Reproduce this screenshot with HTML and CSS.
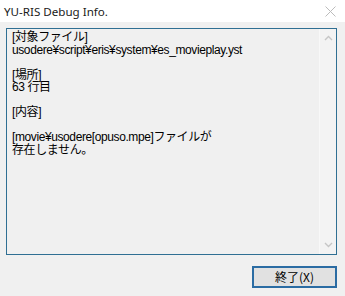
FILE: index.html
```html
<!DOCTYPE html>
<html lang="ja">

<head>
    <meta charset="UTF-8">
    <title>YU-RIS Debug Info.</title>
    <link rel="stylesheet" href="styles.css">
</head>

<body>
    <div id="window">
        <div class="title-bar">
            <span class="title">YU-RIS Debug Info.</span>
            <span class="close">
                <svg width="11" height="11" viewBox="0 0 11 11">
                    <path d="M0.5 0.5 L10.5 10.5 M10.5 0.5 L0.5 10.5" stroke="#bcbcbc" stroke-width="1" fill="none" />
                </svg>
            </span>
        </div>
        <div class="content">
            <div class="text-box">
                <div class="text">[対象ファイル]<br>usodere¥script¥eris¥system¥es_movieplay.yst<br><br>[場所]<br>63 行目<br><br>[内容]<br><br>[movie¥usodere[opuso.mpe]ファイルが<br>存在しません。</div>
                <div class="scroll">
                    <svg width="9" height="6" viewBox="0 0 9 6">
                        <path d="M1 5 L4.5 1.5 L8 5" stroke="#c6c6c6" stroke-width="1.4" fill="none" />
                    </svg>
                    <svg width="9" height="6" viewBox="0 0 9 6">
                        <path d="M1 1 L4.5 4.5 L8 1" stroke="#c6c6c6" stroke-width="1.4" fill="none" />
                    </svg>
                </div>
            </div>
            <div class="buttons">
                <div class="button">終了(X)</div>
            </div>
        </div>
    </div>
</body>

</html>
```

FILE: styles.css
```css
* {
    padding: 0;
    margin: 0;
    box-sizing: border-box;
}

body {
    width: 345px;
    height: 296px;
    background: #f0f0f0;
    overflow: hidden;
}

#window {
    width: 345px;
    height: 296px;
    display: flex;
    flex-direction: column;
}

.title-bar {
    height: 22px;
    background: #ffffff;
    display: flex;
    align-items: center;
    justify-content: space-between;
    padding: 0 9px 0 4px;
}

.title {
    font-family: "Noto Sans", sans-serif;
    font-size: 11.6px;
    color: #1a1a1a;
}

.close {
    display: flex;
}

.content {
    flex: 1;
    padding: 6px 8px 0 6px;
    display: flex;
    flex-direction: column;
}

.text-box {
    height: 227px;
    border: 1px solid #2f6f93;
    background: #f0f0f0;
    display: flex;
}

.text {
    flex: 1;
    padding: 2px 0 0 5px;
    font-family: "Liberation Sans", "Noto Sans CJK JP", sans-serif;
    font-size: 12px;
    line-height: 12.5px;
    letter-spacing: -0.4px;
    color: #000000;
}

.scroll {
    width: 17px;
    background: #f3f3f3;
    border-left: 1px solid #f8f8f8;
    display: flex;
    flex-direction: column;
    justify-content: space-between;
    align-items: center;
    padding: 6px 0 6px 0;
}

.buttons {
    display: flex;
    justify-content: flex-end;
    padding-top: 11px;
}

.button {
    width: 85px;
    height: 22px;
    border: 2px solid #2b6ca3;
    background: #e1e1e1;
    font-family: "Noto Sans CJK JP", sans-serif;
    font-size: 12px;
    line-height: 18px;
    text-align: center;
    color: #000000;
}
```
